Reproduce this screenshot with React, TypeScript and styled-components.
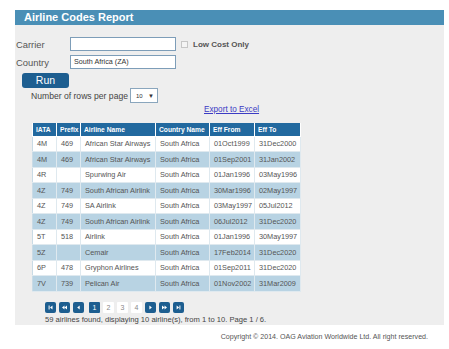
import React from "react";
import styled, { createGlobalStyle } from "styled-components";

const Global = createGlobalStyle`
  html, body { margin: 0; padding: 0; background: #ffffff; }
  body { font-family: "Liberation Sans", Arial, sans-serif; color: #555; }
`;

const Page = styled.div`
  width: 449px;
  height: 349px;
  padding: 10px 5px 0 15px;
  box-sizing: border-box;
  display: flex;
  flex-direction: column;
`;

const TitleBar = styled.div`
  height: 15px;
  background: #4a8fb6;
  color: #fff;
  font-weight: bold;
  font-size: 11px;
  line-height: 15px;
  padding-left: 9px;
`;

const Panel = styled.div`
  background: #eeeeee;
  height: 300px;
  padding: 12px 0 0 1px;
  box-sizing: border-box;
  display: flex;
  flex-direction: column;
`;

const FormRow = styled.div<{ $gap?: number }>`
  display: flex;
  align-items: center;
  height: 14px;
  margin-bottom: ${(p) => p.$gap ?? 0}px;
`;

const Label = styled.label`
  width: 54px;
  font-size: 9.4px;
  color: #555;
`;

const TextInput = styled.div`
  width: 106px;
  height: 14px;
  box-sizing: border-box;
  border: 1px solid #7d9db8;
  background: #fff;
  font-size: 7.2px;
  line-height: 12px;
  padding-left: 3px;
  color: #333;
`;

const Check = styled.span`
  width: 7px;
  height: 7px;
  margin-left: 5px;
  border: 1px solid #c6c6c6;
  background: #f4f4f4;
  box-sizing: border-box;
`;

const CheckLabel = styled.span`
  margin-left: 5px;
  font-size: 8px;
  font-weight: bold;
  color: #555;
`;

const RunButton = styled.button`
  margin: 0 0 0 6px;
  width: 47px;
  height: 15px;
  padding: 0;
  border: none;
  border-radius: 3px;
  background: #1d5e90;
  color: #fff;
  font-family: "Liberation Sans", Arial, sans-serif;
  font-size: 10.5px;
  line-height: 15px;
`;

const RowsLine = styled.div`
  display: flex;
  align-items: center;
  margin-left: 15px;
  height: 15px;
  font-size: 8.6px;
  color: #444;
`;

const Select = styled.div`
  margin-left: 2px;
  width: 28px;
  height: 15px;
  box-sizing: border-box;
  border: 1px solid #8aa6bd;
  background: #fff;
  display: flex;
  align-items: center;
  justify-content: space-between;
  padding: 0 3px 0 5px;
  font-size: 6px;
  color: #333;
`;

const ExportLink = styled.a`
  margin: 2px 0 0 188px;
  height: 10px;
  font-size: 8.2px;
  line-height: 10px;
  color: #3b3bc4;
  text-decoration: underline;
`;

const Table = styled.table`
  margin: 8px 0 0 16px;
  width: 268px;
  border-collapse: collapse;
  table-layout: fixed;
  font-size: 7.3px;
`;

const Th = styled.th<{ $w: number }>`
  width: ${(p) => p.$w}px;
  box-sizing: border-box;
  height: 13px;
  padding: 0 0 0 3px;
  background: #22699f;
  color: #fff;
  font-weight: bold;
  font-size: 6.7px;
  text-align: left;
  border: 1px solid #fff;
  border-top: none;
  white-space: nowrap;
  overflow: hidden;
`;

const Tr = styled.tr<{ $alt: boolean }>`
  background: ${(p) => (p.$alt ? "#b8d3e3" : "#ffffff")};
`;

const Td = styled.td`
  height: 15.5px;
  padding: 0 0 0 4px;
  box-sizing: border-box;
  color: #555;
  border: 1px solid #dfe9ef;
  border-left-color: #c9dbe6;
  white-space: nowrap;
  overflow: hidden;
`;

const Pager = styled.div`
  display: flex;
  align-items: center;
  margin: 10px 0 0 29px;
  height: 11px;
`;

const PagerGroup = styled.div<{ $ml?: number }>`
  display: flex;
  gap: 3px;
  margin-left: ${(p) => p.$ml ?? 0}px;
`;

const NavBtn = styled.span`
  width: 11px;
  height: 11px;
  border-radius: 2px;
  background: #1d5e90;
  display: flex;
  align-items: center;
  justify-content: center;
`;

const PageNum = styled.span<{ $active?: boolean }>`
  width: 11px;
  height: 11px;
  border-radius: 1px;
  background: ${(p) => (p.$active ? "#1d5e90" : "#ffffff")};
  color: ${(p) => (p.$active ? "#ffffff" : "#888")};
  font-size: 7px;
  line-height: 11px;
  text-align: center;
`;

const Summary = styled.div`
  margin: 2px 0 0 29px;
  font-size: 7.6px;
  color: #444;
`;

const Footer = styled.div`
  margin-top: 8px;
  padding-right: 16px;
  text-align: right;
  font-size: 7.1px;
  color: #555;
`;

const rows: string[][] = [
  ["4M", "469", "African Star Airways", "South Africa", "01Oct1999", "31Dec2000"],
  ["4M", "469", "African Star Airways", "South Africa", "01Sep2001", "31Jan2002"],
  ["4R", "", "Spurwing Air", "South Africa", "01Jan1996", "03May1996"],
  ["4Z", "749", "South African Airlink", "South Africa", "30Mar1996", "02May1997"],
  ["4Z", "749", "SA Airlink", "South Africa", "03May1997", "05Jul2012"],
  ["4Z", "749", "South African Airlink", "South Africa", "06Jul2012", "31Dec2020"],
  ["5T", "518", "Airlink", "South Africa", "01Jan1996", "30May1997"],
  ["5Z", "", "Cemair", "South Africa", "17Feb2014", "31Dec2020"],
  ["6P", "478", "Gryphon Airlines", "South Africa", "01Sep2011", "31Dec2020"],
  ["7V", "739", "Pelican Air", "South Africa", "01Nov2002", "31Mar2009"],
];

const cols: [string, number][] = [
  ["IATA", 24],
  ["Prefix", 24],
  ["Airline Name", 75],
  ["Country Name", 54],
  ["Eff From", 45],
  ["Eff To", 46],
];

type Kind = "first" | "rew" | "prev" | "next" | "ff" | "last";

const Glyph = ({ kind }: { kind: Kind }) => {
  const tri = (x: number, dir: 1 | -1) =>
    dir === 1 ? `M${x} 2.5 L${x + 2.5} 4.5 L${x} 6.5 Z` : `M${x + 2.5} 2.5 L${x} 4.5 L${x + 2.5} 6.5 Z`;
  let d = "";
  let bar: number | null = null;
  switch (kind) {
    case "first":
      d = tri(4, -1);
      bar = 2.6;
      break;
    case "rew":
      d = tri(2, -1) + tri(4.5, -1);
      break;
    case "prev":
      d = tri(3.2, -1);
      break;
    case "next":
      d = tri(3.4, 1);
      break;
    case "ff":
      d = tri(2, 1) + tri(4.5, 1);
      break;
    case "last":
      d = tri(2.6, 1);
      bar = 5.4;
      break;
  }
  return (
    <svg width="9" height="9" viewBox="0 0 9 9">
      <path d={d} fill="#fff" />
      {bar !== null && <rect x={bar} y={2.5} width={1} height={4} fill="#fff" />}
    </svg>
  );
};

export default function App() {
  return (
    <>
      <Global />
      <Page>
        <TitleBar>Airline Codes Report</TitleBar>
        <Panel>
          <FormRow $gap={4}>
            <Label>Carrier</Label>
            <TextInput />
            <Check />
            <CheckLabel>Low Cost Only</CheckLabel>
          </FormRow>
          <FormRow $gap={4}>
            <Label>Country</Label>
            <TextInput>South Africa (ZA)</TextInput>
          </FormRow>
          <RunButton>Run</RunButton>
          <RowsLine>
            Number of rows per page
            <Select>
              <span>10</span>
              <span>▼</span>
            </Select>
          </RowsLine>
          <ExportLink>Export to Excel</ExportLink>
          <Table>
            <thead>
              <tr>
                {cols.map(([c, w]) => (
                  <Th key={c} $w={w}>
                    {c}
                  </Th>
                ))}
              </tr>
            </thead>
            <tbody>
              {rows.map((r, i) => (
                <Tr key={i} $alt={i % 2 === 1}>
                  {r.map((c, j) => (
                    <Td key={j}>{c}</Td>
                  ))}
                </Tr>
              ))}
            </tbody>
          </Table>
          <Pager>
            <PagerGroup>
              <NavBtn><Glyph kind="first" /></NavBtn>
              <NavBtn><Glyph kind="rew" /></NavBtn>
              <NavBtn><Glyph kind="prev" /></NavBtn>
            </PagerGroup>
            <PagerGroup $ml={5}>
              <PageNum $active>1</PageNum>
              <PageNum>2</PageNum>
              <PageNum>3</PageNum>
              <PageNum>4</PageNum>
            </PagerGroup>
            <PagerGroup $ml={3}>
              <NavBtn><Glyph kind="next" /></NavBtn>
              <NavBtn><Glyph kind="ff" /></NavBtn>
              <NavBtn><Glyph kind="last" /></NavBtn>
            </PagerGroup>
          </Pager>
          <Summary>59 airlines found, displaying 10 airline(s), from 1 to 10. Page 1 / 6.</Summary>
        </Panel>
        <Footer>Copyright © 2014. OAG Aviation Worldwide Ltd. All right reserved.</Footer>
      </Page>
    </>
  );
}
